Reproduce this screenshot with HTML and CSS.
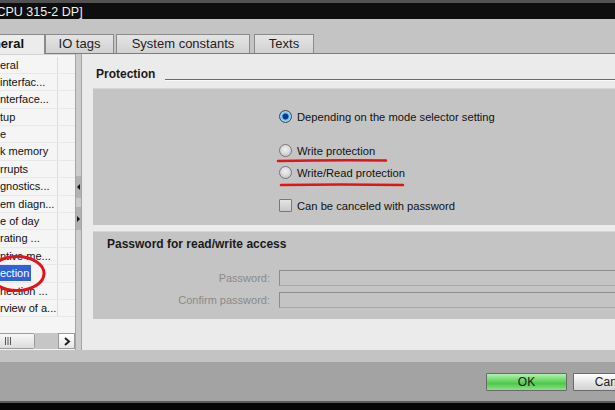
FILE: index.html
```html
<!DOCTYPE html>
<html>
<head>
<meta charset="utf-8">
<link rel="stylesheet" href="styles.css">
</head>
<body>
<div class="window">
  <div class="titlebar"><span class="title">[CPU 315-2 DP]</span></div>
  <div class="tabbar">
    <div class="tab tab-active">General</div>
    <div class="tab tab-io">IO tags</div>
    <div class="tab tab-sys">System constants</div>
    <div class="tab tab-texts">Texts</div>
  </div>
  <div class="main">
    <div class="nav">
      <div class="nav-list">
        <div class="nav-row"><span class="nav-name">eral</span></div>
        <div class="nav-row"><span class="nav-name">interfac...</span></div>
        <div class="nav-row"><span class="nav-name">nterface...</span></div>
        <div class="nav-row"><span class="nav-name">tup</span></div>
        <div class="nav-row"><span class="nav-name">e</span></div>
        <div class="nav-row"><span class="nav-name">k memory</span></div>
        <div class="nav-row"><span class="nav-name">rrupts</span></div>
        <div class="nav-row"><span class="nav-name">gnostics...</span></div>
        <div class="nav-row"><span class="nav-name">em diagn...</span></div>
        <div class="nav-row"><span class="nav-name">e of day</span></div>
        <div class="nav-row"><span class="nav-name">rating ...</span></div>
        <div class="nav-row"><span class="nav-name">ntive me...</span></div>
        <div class="nav-row"><span class="nav-name"><span class="nav-sel">ection</span></span></div>
        <div class="nav-row"><span class="nav-name">nection ...</span></div>
        <div class="nav-row"><span class="nav-name">rview of a...</span></div>
      </div>
      <div class="hscroll">
        <div class="hs-thumb">
          <svg class="grip" width="8" height="8" viewBox="0 0 8 8"><path d="M1.5 0V8M4 0V8M6.5 0V8" stroke="#555" stroke-width="1"/></svg>
        </div>
        <div class="hs-track"></div>
        <div class="hs-btn">
          <svg width="8" height="9" viewBox="0 0 8 9"><path d="M2 1L6 4.5L2 8" fill="none" stroke="#222" stroke-width="2"/></svg>
        </div>
      </div>
    </div>
    <div class="splitter">
      <div class="split-btn split-btn-top"><span class="tri-left"></span></div>
      <div class="split-btn split-btn-bottom"><span class="tri-right"></span></div>
    </div>
    <div class="content">
      <div class="section-head">
        <span class="section-title">Protection</span>
        <span class="section-line"></span>
      </div>
      <div class="box box-protect">
        <div class="opt opt-first"><span class="radio radio-on"></span><span class="opt-text">Depending on the mode selector setting</span></div>
        <div class="opt opt-second"><span class="radio"></span><span class="opt-text">Write protection</span></div>
        <div class="opt opt-third"><span class="radio"></span><span class="opt-text">Write/Read protection</span></div>
        <div class="opt opt-fourth"><span class="checkbox"></span><span class="opt-text">Can be canceled with password</span></div>
      </div>
      <div class="box box-password">
        <div class="box-title">Password for read/write access</div>
        <div class="pw-grid">
          <span class="pw-label">Password:</span><span class="pw-input"></span>
          <span class="pw-label">Confirm password:</span><span class="pw-input"></span>
        </div>
      </div>
    </div>
  </div>
  <div class="footer-band"></div>
  <div class="footer">
    <button class="btn btn-ok">OK</button>
    <button class="btn btn-cancel">Cancel</button>
  </div>
  <div class="bottom-edge"></div>
  <svg class="annotations" width="615" height="410" viewBox="0 0 615 410">
    <ellipse cx="17" cy="273.5" rx="27" ry="17" fill="none" stroke="#e3121b" stroke-width="3"/>
    <path d="M278 161 Q330 160 386 160.5" fill="none" stroke="#e3121b" stroke-width="2.5" stroke-linecap="round"/>
    <path d="M281 185 Q340 184 403 185" fill="none" stroke="#e3121b" stroke-width="2.5" stroke-linecap="round"/>
  </svg>
</div>
</body>
</html>
```
FILE: styles.css
```css
* { box-sizing: border-box; }
html, body { margin: 0; padding: 0; }
body {
  width: 615px;
  height: 410px;
  overflow: hidden;
  background: #000;
  font-family: "Liberation Sans", Arial, sans-serif;
  font-size: 11px;
  color: #111;
}
.window {
  position: relative;
  width: 615px;
  height: 410px;
  overflow: hidden;
  display: flex;
  flex-direction: column;
}

/* title */
.titlebar {
  flex: none;
  height: 19px;
  border-top: 3px solid #525252;
  background: #0e0e0e;
  color: #f0f0f0;
  font-size: 12.5px;
  line-height: 18px;
  white-space: nowrap;
}
.title { display: inline-block; margin-left: -7px; }

/* tabs */
.tabbar {
  flex: none;
  height: 35px;
  background: #c4c4c4;
  border-bottom: 1px solid #7c7c7c;
  display: flex;
  align-items: flex-end;
  position: relative;
  z-index: 1;
}
.tab {
  height: 19px;
  border: 1px solid #8a8a8a;
  border-bottom: none;
  background: linear-gradient(#e4e4e4, #d2d2d2);
  color: #222;
  font-size: 13px;
  line-height: 18px;
  text-align: center;
  white-space: nowrap;
}
.tab-active {
  width: 84px;
  margin-left: -39px;
  margin-bottom: -1px;
  height: 20px;
  background: #ececec;
  font-weight: bold;
  color: #111;
  text-align: right;
  padding-right: 20px;
}
.tab-io { width: 69px; }
.tab-sys { width: 134px; margin-left: 2px; }
.tab-texts { width: 60px; margin-left: 4px; }

/* main area */
.main {
  flex: none;
  height: 296px;
  display: flex;
  background: #ebebeb;
}
.nav {
  flex: none;
  width: 75px;
  background: #f5f5f5;
  border-top: 1px solid #d2d2d2;
  display: flex;
  flex-direction: column;
}
.nav-list { padding-top: 1.5px; }
.nav-row {
  height: 17.4px;
  display: flex;
  border-bottom: 1px solid #e8e8e8;
}
.nav-name {
  width: 58px;
  border-right: 1px solid #dcdcdc;
  line-height: 17px;
  white-space: nowrap;
  overflow: hidden;
  color: #111;
}
.nav-sel {
  display: inline-block;
  height: 16px;
  line-height: 16px;
  background: #2f62d3;
  color: #fff;
  padding-right: 2px;
}
.hscroll {
  margin-top: auto;
  margin-bottom: 1px;
  height: 16px;
  display: flex;
}
.hs-thumb {
  width: 35px;
  border: 1px solid #9a9a9a;
  border-left: none;
  border-radius: 0 2px 2px 0;
  background: linear-gradient(#f7f7f7, #dcdcdc);
  display: flex;
  align-items: center;
  padding-left: 4px;
}
.hs-track { width: 23px; background: #c6c6c6; }
.hs-btn {
  width: 17px;
  border: 1px solid #9a9a9a;
  background: linear-gradient(#ffffff, #e6e6e6);
  display: flex;
  align-items: center;
  justify-content: center;
}

.splitter {
  flex: none;
  width: 7px;
  background: #cccccc;
  border-left: 1px solid #a4a4a4;
  border-right: 1px solid #a4a4a4;
  display: flex;
  flex-direction: column;
}
.split-btn {
  background: #b2b2b2;
  display: flex;
  align-items: center;
  justify-content: center;
}
.split-btn-top { margin-top: 122px; height: 22px; }
.split-btn-bottom { margin-top: 9px; height: 23px; }
.tri-left {
  width: 0; height: 0;
  border-top: 3px solid transparent;
  border-bottom: 3px solid transparent;
  border-right: 3px solid #111;
}
.tri-right {
  width: 0; height: 0;
  border-top: 3px solid transparent;
  border-bottom: 3px solid transparent;
  border-left: 3px solid #111;
}

.content {
  flex: 1;
  min-width: 0;
  padding-left: 11px;
  margin-right: -10px;
}
.section-head {
  margin-top: 13px;
  height: 14px;
  display: flex;
  align-items: flex-start;
}
.section-title {
  padding-left: 3px;
  font-size: 12px;
  font-weight: bold;
  line-height: 14px;
  color: #1a1a1a;
}
.section-line {
  flex: 1;
  margin-left: 10px;
  margin-top: 12px;
  border-top: 1px solid #6a6a6a;
  border-bottom: 1px solid #fafafa;
}

.box {
  background: #c4c4c4;
  border-top: 1px solid #d6d6d6;
}
.box-protect {
  margin-top: 7px;
  height: 137px;
  padding: 19px 0 0 186px;
}
.opt {
  display: flex;
  align-items: center;
  gap: 5px;
  height: 17px;
  white-space: nowrap;
  color: #111;
  font-size: 11.2px;
}
.opt-second { margin-top: 17px; }
.opt-third { margin-top: 5px; }
.opt-fourth { margin-top: 16px; }
.radio {
  flex: none;
  width: 13px;
  height: 13px;
  border-radius: 50%;
  border: 1px solid #767676;
  background: radial-gradient(circle at 50% 40%, #f0f0f0 0, #dcdcdc 45%, #b8b8b8 100%);
}
.radio-on {
  border-color: #4a4a4a;
  background: radial-gradient(circle, #0b3a8c 0, #0b3a8c 2.5px, #6fc0ee 3.5px, #9ad6f6 5px, #5a9fd0 6px);
}
.checkbox {
  flex: none;
  width: 13px;
  height: 13px;
  border: 1px solid #777;
  border-radius: 1px;
  background: linear-gradient(#e4e4e4, #c8c8c8);
}

.box-password {
  margin-top: 6px;
  height: 88px;
  padding: 5px 0 0 14px;
}
.box-title {
  font-size: 12px;
  font-weight: bold;
  line-height: 14px;
  color: #1a1a1a;
}
.pw-grid {
  margin-top: 19px;
  display: grid;
  grid-template-columns: 163px 1fr;
  grid-auto-rows: 16px;
  column-gap: 9px;
  row-gap: 6px;
}
.pw-label {
  text-align: right;
  color: #8a8a8a;
  line-height: 16px;
  white-space: nowrap;
}
.pw-input {
  border: 1px solid #8c8c8c;
  border-bottom-color: #a8a8a8;
  background: #c4c4c4;
}

/* footer */
.footer-band {
  flex: none;
  height: 12px;
  background: #c3c3c3;
}
.footer {
  flex: none;
  height: 41px;
  background: #a3a3a3;
  border-bottom: 2px solid #5a5a5a;
  display: flex;
  justify-content: flex-end;
  align-items: flex-start;
  gap: 6px;
  padding-top: 11px;
  margin-right: -39px;
}
.btn {
  width: 81px;
  height: 18px;
  border: 1px solid #6a6a6a;
  border-radius: 1px;
  font-family: "Liberation Sans", Arial, sans-serif;
  font-size: 12px;
  line-height: 16px;
  padding: 0;
  color: #1a1a1a;
}
.btn-ok {
  background: linear-gradient(#b4f0b2 0, #74dc70 35%, #50c84c 60%, #8ee08a 100%);
}
.btn-cancel {
  background: linear-gradient(#ffffff, #e2e2e2 60%, #d4d4d4);
}
.bottom-edge {
  flex: 1;
  background: #050505;
}

.annotations {
  position: absolute;
  left: 0;
  top: 0;
  pointer-events: none;
}
```
